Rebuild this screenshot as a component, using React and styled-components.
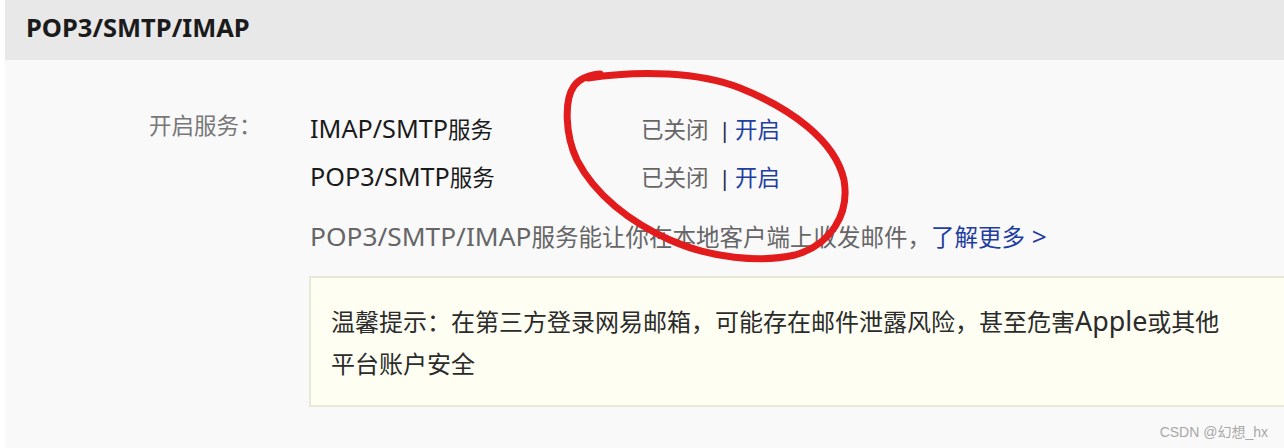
import React from 'react';
import styled, { createGlobalStyle } from 'styled-components';

const GlobalStyle = createGlobalStyle`
  html, body {
    margin: 0;
    padding: 0;
    background: #ffffff;
  }
  body {
    font-family: "Noto Sans", "Noto Sans CJK SC", sans-serif;
  }
`;

// protocol part is latin, the rest is chinese
const services = [
  { protocol: 'IMAP/SMTP', label: '服务', status: '已关闭', action: '开启' },
  { protocol: 'POP3/SMTP', label: '服务', status: '已关闭', action: '开启' }
];

function App() {
  return (
    <>
      <GlobalStyle />
      <Page>
        <Header>
          <Title>POP3/SMTP/IMAP</Title>
        </Header>
        <Body>
          <Label>开启服务：</Label>
          <Content>
            {services.map(service => (
              <ServiceRow key={service.protocol}>
                <ServiceName>
                  <Latin>{service.protocol}</Latin>
                  {service.label}
                </ServiceName>
                <Status>
                  {service.status}
                  <Divider>|</Divider>
                  <Link>{service.action}</Link>
                </Status>
              </ServiceRow>
            ))}
            <Description>
              <Latin>POP3/SMTP/IMAP</Latin>服务能让你在本地客户端上收发邮件，
              <Link>
                了解更多<Latin> &gt;</Latin>
              </Link>
            </Description>
            <TipBox>
              <TipText>
                温馨提示：在第三方登录网易邮箱，可能存在邮件泄露风险，甚至危害<Latin>Apple</Latin>或其他平台账户安全
              </TipText>
            </TipBox>
          </Content>
          <Scribble viewBox="0 0 1279 388" aria-hidden="true">
            <path
              d="M 588 78 C 640 70, 700 72, 740 88 C 790 108, 835 140, 844 180 C 850 215, 830 245, 795 255 C 760 263, 710 258, 670 240 C 630 222, 595 195, 577 160 C 565 135, 564 100, 574 86 C 580 78, 588 75, 600 74"
              transform="translate(-5 -60)"
            />
          </Scribble>
          <Watermark>CSDN @幻想_hx</Watermark>
        </Body>
      </Page>
    </>
  );
}

const Page = styled.div`
  width: 1284px;
  height: 448px;
  padding-left: 5px;
  box-sizing: border-box;
  background: #ffffff;
  overflow: hidden;
`;

const Header = styled.div`
  height: 60px;
  background: #e8e8e8;
  display: flex;
  align-items: center;
  padding-left: 21px;
`;

const Title = styled.h2`
  margin: 0 0 7px;
  font-size: 25.5px;
  font-weight: 700;
  color: #1b1b1b;
`;

const Body = styled.div`
  position: relative;
  height: 388px;
  background: #f9f9fa;
  display: flex;
  align-items: flex-start;
  padding: 44px 0 0 144px;
  box-sizing: border-box;
  overflow: hidden;
`;

const Label = styled.div`
  width: 161px;
  flex-shrink: 0;
  font-size: 22.5px;
  line-height: 44px;
  color: #777777;
`;

const Content = styled.div`
  display: flex;
  flex-direction: column;
  flex-shrink: 0;
`;

// latin glyphs run larger than the chinese ones in the original font
const Latin = styled.span`
  font-size: 1.12em;
  line-height: 1;
`;

const ServiceRow = styled.div`
  display: flex;
  align-items: center;
  height: 48px;
  font-size: 22.5px;
`;

const ServiceName = styled.span`
  width: 331px;
  color: #1a1a1a;
`;

const Status = styled.span`
  color: #666666;
`;

const Divider = styled.span`
  color: #2a2f4a;
  margin: 0 4px 0 10px;
`;

const Link = styled.a`
  color: #1f3e9f;
  cursor: pointer;
  text-decoration: none;
`;

const Description = styled.div`
  margin-top: 13px;
  font-size: 23.5px;
  line-height: 48px;
  color: #666666;
`;

const TipBox = styled.div`
  margin-top: 15px;
  margin-left: -1px;
  background: #fefef2;
  border: 2px solid #e8e8d6;
  padding: 23px 80px 20px 20px;
`;

const TipText = styled.p`
  margin: 0;
  width: 902px;
  font-size: 24px;
  line-height: 42px;
  color: #2b2b2b;
`;

const Scribble = styled.svg`
  position: absolute;
  left: 0;
  top: 0;
  width: 1279px;
  height: 388px;
  pointer-events: none;

  path {
    fill: none;
    stroke: #e21c1c;
    stroke-width: 7;
    stroke-linecap: round;
    stroke-linejoin: round;
  }
`;

const Watermark = styled.span`
  position: absolute;
  right: 16px;
  bottom: 7px;
  font-family: "Liberation Sans", "Noto Sans CJK SC", sans-serif;
  font-size: 14px;
  color: #a8a8a8;
`;

export default App;
